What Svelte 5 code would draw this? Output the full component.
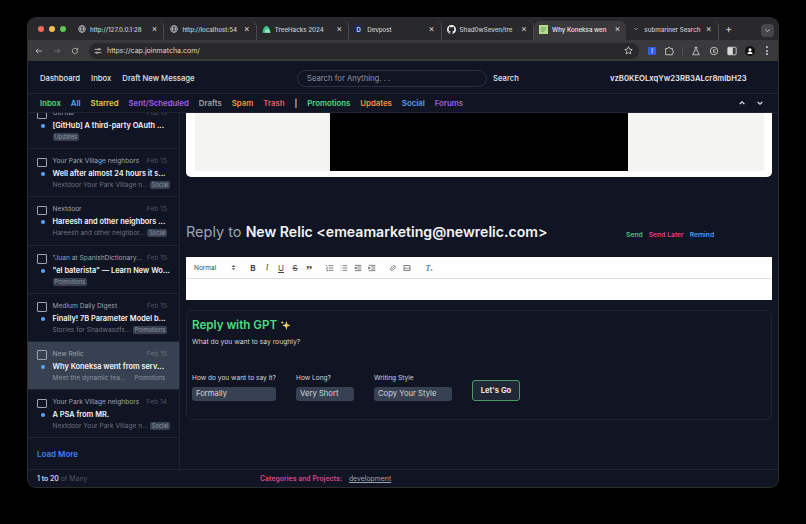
<script>
	const tabs = [
		{ title: 'http://127.0.0.1:28', icon: 'globe' },
		{ title: 'http://localhost:54', icon: 'globe' },
		{ title: 'TreeHacks 2024', icon: 'tree' },
		{ title: 'Devpost', icon: 'dev' },
		{ title: 'Shad0wSeven/tre', icon: 'gh' },
		{ title: 'Why Koneksa wen', icon: 'mail', active: true },
		{ title: 'submariner Search', icon: 'sub' }
	];

	const filters = [
		['Inbox', '#4ade80'], ['All', '#60a5fa'], ['Starred', '#eac54f'], ['Sent/Scheduled', '#a25fe0'],
		['Drafts', '#9ca3af'], ['Spam', '#fb923c'], ['Trash', '#e5606a']
	];
	const categories = [
		['Promotions', '#4ade80'], ['Updates', '#fb923c'], ['Social', '#5b9bea'], ['Forums', '#9b5fe0']
	];

	const mails = [
		{ from: 'GitHub', date: 'Feb 15', title: '[GitHub] A third-party OAuth ...', tag: 'Updates' },
		{ from: 'Your Park Village neighbors', date: 'Feb 15', title: 'Well after almost 24 hours it s...', preview: 'Nextdoor Your Park Village n...', tag: 'Social' },
		{ from: 'Nextdoor', date: 'Feb 15', title: 'Hareesh and other neighbors ...', preview: 'Hareesh and other neighbor...', tag: 'Social' },
		{ from: '"Juan at SpanishDictionary...', date: 'Feb 15', title: '"el baterista" — Learn New Wo...', tag: 'Promotions' },
		{ from: 'Medium Daily Digest', date: 'Feb 15', title: 'Finally! 7B Parameter Model b...', preview: 'Stories for Shadwasdfs...', tag: 'Promotions' },
		{ from: 'New Relic', date: 'Feb 15', title: 'Why Koneksa went from serv...', preview: 'Meet the dynamic tea...', tag: 'Promotions', selected: true },
		{ from: 'Your Park Village neighbors', date: 'Feb 14', title: 'A PSA from MR.', preview: 'Nextdoor Your Park Village n...', tag: 'Social' }
	];

	const selects = [
		{ label: 'How do you want to say it?', value: 'Formally', width: 84 },
		{ label: 'How Long?', value: 'Very Short', width: 58 },
		{ label: 'Writing Style', value: 'Copy Your Style', width: 78 }
	];
</script>

<div class="window">
	<div class="tabbar">
		<div class="lights"><i class="red"></i><i class="yellow"></i><i class="green"></i></div>
		{#each tabs as tab}
			<div class="tab" class:active={tab.active}>
				<span class="favicon">
					{#if tab.icon === 'globe'}
						<svg viewBox="0 0 10 10" width="8" height="8" fill="none" stroke="#c4c7cc" stroke-width="1"><circle cx="5" cy="5" r="4.2" /><ellipse cx="5" cy="5" rx="1.9" ry="4.2" /><path d="M1 5h8" /></svg>
					{:else if tab.icon === 'tree'}
						<svg viewBox="0 0 10 10" width="9" height="9"><path d="M0.5 8.5C1 4 3 1 5 1s4 3 4.5 7.5z" fill="#3fbf8f" /><path d="M3 8.5C3.5 6 4.5 4.5 6 4.5s2.5 2 3 4z" fill="#9be8c4" /></svg>
					{:else if tab.icon === 'dev'}
						<span class="dev">D</span>
					{:else if tab.icon === 'gh'}
						<svg viewBox="0 0 16 16" width="9" height="9" fill="#f1f1f1"><path d="M8 0C3.58 0 0 3.58 0 8c0 3.54 2.29 6.53 5.47 7.59.4.07.55-.17.55-.38v-1.34c-2.23.49-2.7-1.07-2.7-1.07-.36-.92-.89-1.17-.89-1.17-.73-.5.05-.49.05-.49.8.06 1.23.83 1.23.83.71 1.22 1.87.87 2.33.66.07-.52.28-.87.51-1.07-1.78-.2-3.64-.89-3.64-3.95 0-.87.31-1.59.82-2.15-.08-.2-.36-1.02.08-2.12 0 0 .67-.21 2.2.82A7.7 7.7 0 0 1 8 3.87c.68 0 1.36.09 2 .27 1.53-1.04 2.2-.82 2.2-.82.44 1.1.16 1.92.08 2.12.51.56.82 1.27.82 2.15 0 3.07-1.87 3.75-3.65 3.95.29.25.54.73.54 1.48v2.19c0 .21.15.46.55.38A8 8 0 0 0 16 8c0-4.42-3.58-8-8-8z" /></svg>
					{:else if tab.icon === 'mail'}
						<svg viewBox="0 0 10 10" width="9" height="9"><rect width="10" height="10" fill="#b7dc8e" /><path d="M2 3h6M2 5h6M2 7h4" stroke="#5f8f50" stroke-width="0.8" /></svg>
					{:else}
						<svg viewBox="0 0 10 10" width="6" height="6" fill="none" stroke="#c4c7cc" stroke-width="1"><path d="M2 3.5l3 3 3-3" /></svg>
					{/if}
				</span>
				<span class="tab-title">{tab.title}</span>
				<span class="tab-close">×</span>
			</div>
		{/each}
		<span class="plus">+</span>
		<span class="tab-menu">
			<svg viewBox="0 0 10 10" width="7" height="7" fill="none" stroke="#d5d5d5" stroke-width="1.3"><path d="M2 3.5l3 3 3-3" /></svg>
		</span>
	</div>

	<div class="toolbar">
		<svg class="nav-icon" viewBox="0 0 12 12" fill="none" stroke="#c8c8c8" stroke-width="1.2"><path d="M10.5 6h-9M5 2.5L1.5 6 5 9.5" /></svg>
		<svg class="nav-icon" viewBox="0 0 12 12" fill="none" stroke="#777" stroke-width="1.2"><path d="M1.5 6h9M7 2.5L10.5 6 7 9.5" /></svg>
		<svg class="nav-icon" viewBox="0 0 12 12" fill="none" stroke="#c8c8c8" stroke-width="1.2"><path d="M10 6a4 4 0 1 1-1.2-2.9L10 4.3V1.8" /><path d="M10 4.5H7.5" /></svg>
		<div class="omnibox">
			<span class="tune">
				<svg viewBox="0 0 12 12" width="8" height="8" fill="none" stroke="#d8d8d8" stroke-width="1.2"><path d="M1 3.5h5M9 3.5h2M1 8.5h2M6 8.5h5" /><circle cx="7.5" cy="3.5" r="1.3" /><circle cx="4.5" cy="8.5" r="1.3" /></svg>
			</span>
			<span class="url">https://cap.joinmatcha.com/</span>
			<svg class="star" viewBox="0 0 12 12" width="9" height="9" fill="none" stroke="#e2e2e2" stroke-width="1"><path d="M6 1l1.5 3.3 3.5.4-2.6 2.4.7 3.5L6 8.8l-3.1 1.8.7-3.5L1 4.7l3.5-.4z" /></svg>
		</div>
		<div class="ext">
			<span class="ext-blue">I</span>
			<svg viewBox="0 0 12 12" width="10" height="10" fill="none" stroke="#c8c8c8" stroke-width="1.1"><path d="M2 3h2.5a1.5 1.5 0 0 1 3 0H10v2.5a1.5 1.5 0 0 1 0 3v2H2z" /></svg>
			<i class="ext-sep"></i>
			<svg viewBox="0 0 12 12" width="10" height="10" fill="none" stroke="#c8c8c8" stroke-width="1.1"><path d="M4.5 1.5h3M5 1.5V5L2 10.5h8L7 5V1.500" /></svg>
			<svg viewBox="0 0 12 12" width="10" height="10" fill="none" stroke="#c8c8c8" stroke-width="1.1"><circle cx="6" cy="6" r="4.5" /><path d="M8 4.5H5.5v3H8" /></svg>
			<svg viewBox="0 0 12 12" width="10" height="10"><rect x="1" y="1.5" width="10" height="9" rx="1" fill="none" stroke="#d8d8d8" /><rect x="1" y="1.5" width="6" height="9" fill="#d8d8d8" /></svg>
			<svg viewBox="0 0 12 12" width="10" height="10"><circle cx="6" cy="6" r="6" fill="#111" /><circle cx="6" cy="4.5" r="1.8" fill="#fff" /><path d="M2.8 9.5c.5-2 1.7-2.7 3.2-2.7s2.700.7 3.200 2.700z" fill="#fff" /></svg>
			<span class="dots"><i></i><i></i><i></i></span>
		</div>
	</div>

	<nav class="topnav">
		<div class="links">
			<span>Dashboard</span>
			<span>Inbox</span>
			<span>Draft New Message</span>
		</div>
		<div class="searchbox">Search for Anything. . .</div>
		<span class="search-btn">Search</span>
		<span class="user-id">vzB0KEOLxqYw23RB3ALcr8mIbH23</span>
	</nav>

	<div class="filters">
		{#each filters as f}
			<span style="color: {f[1]}">{f[0]}</span>
		{/each}
		<span class="pipe">|</span>
		{#each categories as f}
			<span style="color: {f[1]}">{f[0]}</span>
		{/each}
		<div class="chevrons">
			<svg viewBox="0 0 10 10" width="8" height="8" fill="none" stroke="#e5e7eb" stroke-width="1.5"><path d="M2 6.5l3-3 3 3" /></svg>
			<svg viewBox="0 0 10 10" width="8" height="8" fill="none" stroke="#e5e7eb" stroke-width="1.5"><path d="M2 3.5l3 3 3-3" /></svg>
		</div>
	</div>

	<div class="body">
		<aside class="sidebar">
			<div class="mail-list">
				{#each mails as mail}
					<div class="mail" class:selected={mail.selected}>
						<span class="check"></span>
						<div class="mail-main">
							<div class="mail-head">
								<span class="from">{mail.from}</span>
								<span class="date">{mail.date}</span>
							</div>
							<div class="mail-title"><i class="dot"></i>{mail.title}</div>
							<div class="mail-foot">
								{#if mail.preview}<span class="preview">{mail.preview}</span>{/if}
								<span class="tag">{mail.tag}</span>
							</div>
						</div>
					</div>
				{/each}
			</div>
			<div class="load-more">Load More</div>
		</aside>

		<main class="content">
			<div class="message">
				<div class="message-inner">
					<div class="black"></div>
				</div>
			</div>

			<div class="reply-head">
				<h2><span>Reply to</span> <strong>New Relic &lt;emeamarketing@newrelic.com&gt;</strong></h2>
				<div class="reply-actions">
					<span class="send">Send</span>
					<span class="later">Send Later</span>
					<span class="remind">Remind</span>
				</div>
			</div>

			<div class="editor">
				<div class="ql-bar">
					<span class="ql-size">Normal
						<svg viewBox="0 0 8 10" width="5" height="7" fill="#555"><path d="M1 4l3-3 3 3zM1 6l3 3 3-3z" /></svg>
					</span>
					<div class="ql-group">
						<b>B</b><em>I</em><u>U</u><s>S</s><span class="ql-quote">”</span>
					</div>
					<div class="ql-group">
						<span><svg viewBox="0 0 12 12"><path d="M4 2.5h7M4 6h7M4 9.5h7M1 1.5v2M1 5h1L1 7h1M1 8.5h1v2H1" /></svg></span>
						<span><svg viewBox="0 0 12 12"><path d="M4 2.5h7M4 6h7M4 9.5h7M1 2.5h1M1 6h1M1 9.5h1" /></svg></span>
						<span><svg viewBox="0 0 12 12"><path d="M5 4.5h6M5 7.5h6M1 2h10M1 10h10M3.5 4.5L1 6l2.5 1.5z" /></svg></span>
						<span><svg viewBox="0 0 12 12"><path d="M5 4.5h6M5 7.5h6M1 2h10M1 10h10M1 4.5L3.5 6 1 7.5z" /></svg></span>
					</div>
					<div class="ql-group">
						<span><svg viewBox="0 0 12 12"><path d="M5 7l2-2M4.5 4.5L3 6a2 2 0 0 0 3 3l1-1M7.5 7.500L9 6a2 2 0 0 0-3-3L5 4" /></svg></span>
						<span><svg viewBox="0 0 12 12"><rect x="1.5" y="2.5" width="9" height="7" /><path d="M1.5 8l3-2.5 2 1.5 1.5-1 2.500 2" /></svg></span>
					</div>
					<span class="ql-clean"><em>T</em><small>x</small></span>
				</div>
				<div class="ql-editor"></div>
			</div>

			<section class="gpt">
				<h3>Reply with GPT
					<svg viewBox="0 0 12 12" width="11" height="11" fill="#f5d76e"><path d="M7 1l1 3.5L11.5 6 8 7.2 7 11 5.8 7.2 2.5 6l3.300-1.500z" /><path d="M2.5 1l.5 1.300 1.200.5-1.200.5-.5 1.200-.5-1.200L.8 2.800 2 2.300z" /></svg>
				</h3>
				<p>What do you want to say roughly?</p>
				<div class="gpt-row">
					{#each selects as s}
						<div class="field">
							<label>{s.label}</label>
							<div class="select" style="width: {s.width}px">{s.value}</div>
						</div>
					{/each}
					<button>Let's Go</button>
				</div>
			</section>
		</main>
	</div>

	<footer>
		<div class="count"><b>1 to 20</b> of Many</div>
		<div class="cats"><b>Categories and Projects:</b><u>development</u></div>
	</footer>
</div>

<style>
	:global(body) {
		background: #000;
		margin: 0;
	}

	.window {
		width: 750px;
		height: 469px;
		margin: 18px 0 37px 28px;
		border-radius: 8px;
		overflow: hidden;
		background: #111422;
		box-shadow: 0 0 0 1px #2c2c2e;
		display: flex;
		flex-direction: column;
		font-family: Inter, "Liberation Sans", sans-serif;
		color: #e5e7eb;
	}

	/* chrome */
	.tabbar {
		height: 22px;
		background: #29292b;
		display: flex;
		align-items: flex-end;
		flex-shrink: 0;
	}

	.lights {
		width: 44px;
		height: 22px;
		display: flex;
		align-items: center;
		gap: 5px;
		padding-left: 10px;
		box-sizing: border-box;
	}

	.lights i {
		width: 6px;
		height: 6px;
		border-radius: 50%;
	}

	.red { background: #ec6a5e; }
	.yellow { background: #f4bf4f; }
	.green { background: #61c554; }

	.tab {
		width: 92.4px;
		height: 19px;
		box-sizing: border-box;
		padding: 0 6px 3px 5px;
		display: flex;
		align-items: center;
		gap: 4px;
		font-size: 6.2px;
		color: #c8cacd;
		border-right: 1px solid #4a4a4d;
		border-radius: 6px 6px 0 0;
	}

	.tab.active {
		background: #3a3a3c;
		color: #e8e8e8;
		border-right: none;
	}

	.favicon {
		width: 9px;
		display: flex;
		align-items: center;
		justify-content: center;
		flex-shrink: 0;
	}

	.dev {
		width: 9px;
		height: 9px;
		border-radius: 2px;
		background: #1e2c48;
		color: #b9d3f5;
		font-size: 6px;
		font-weight: 700;
		text-align: center;
		line-height: 9px;
	}

	.tab-title {
		flex: 1;
		white-space: nowrap;
		font-weight: 500;
	}

	.tab-close {
		font-size: 9px;
		line-height: 8px;
		color: #d0d0d0;
	}

	.plus {
		width: 20px;
		text-align: center;
		font-size: 11px;
		color: #d0d0d0;
		padding-bottom: 4px;
		line-height: 14px;
	}

	.tab-menu {
		width: 13px;
		height: 13px;
		margin: 0 4px 3px auto;
		border-radius: 4px;
		background: #47474a;
		display: flex;
		align-items: center;
		justify-content: center;
	}

	.toolbar {
		height: 21px;
		background: #3a3a3c;
		display: flex;
		align-items: center;
		padding-left: 7px;
		flex-shrink: 0;
	}

	.nav-icon {
		width: 8px;
		height: 8px;
		margin-right: 10px;
		flex-shrink: 0;
	}

	.omnibox {
		width: 550px;
		height: 16px;
		border-radius: 8px;
		background: #29292b;
		display: flex;
		align-items: center;
		font-size: 7px;
		color: #d8d8d8;
	}

	.tune {
		margin: 0 5px;
		display: flex;
	}

	.url { flex: 1; }

	.star { margin-right: 6px; }

	.ext {
		flex: 1;
		display: flex;
		align-items: center;
		gap: 8px;
		padding-left: 9px;
	}

	.ext-blue {
		width: 8px;
		height: 8px;
		background: #2563eb;
		color: #fff;
		font-size: 6px;
		line-height: 8px;
		text-align: center;
		border-radius: 1px;
	}

	.ext-sep {
		width: 1px;
		height: 8px;
		background: #55555a;
	}

	.dots {
		display: flex;
		flex-direction: column;
		gap: 1.5px;
		margin-left: 3px;
	}

	.dots i {
		width: 2px;
		height: 2px;
		border-radius: 50%;
		background: #d0d0d0;
	}

	/* app nav */
	.topnav {
		height: 33px;
		display: flex;
		align-items: center;
		padding: 2px 0 0 12px;
		border-bottom: 1px solid #1e2433;
		box-sizing: border-box;
		flex-shrink: 0;
		font-size: 7.7px;
		font-weight: 500;
	}

	.links {
		width: 257px;
		display: flex;
		gap: 11px;
		color: #e5e7eb;
	}

	.searchbox {
		width: 190px;
		height: 17px;
		box-sizing: border-box;
		border: 1px solid #2b3140;
		border-radius: 9px;
		padding-left: 9px;
		line-height: 15px;
		color: #8f96a3;
		font-weight: 400;
	}

	.search-btn {
		margin-left: 6px;
		width: 117px;
	}

	.user-id {
		font-weight: 600;
		white-space: nowrap;
	}

	.filters {
		height: 19px;
		display: flex;
		align-items: center;
		gap: 10px;
		padding: 0 14px 0 12px;
		font-size: 7.8px;
		font-weight: 600;
		border-bottom: 1px solid #1e2433;
		box-sizing: border-box;
		flex-shrink: 0;
	}

	.pipe { color: #d1d5db; }

	.chevrons {
		margin-left: auto;
		display: flex;
		gap: 10px;
	}

	/* layout */
	.body {
		flex: 1;
		display: flex;
		min-height: 0;
	}

	.sidebar {
		width: 152px;
		flex-shrink: 0;
		border-right: 1px solid #1e2433;
		box-sizing: border-box;
		overflow: hidden;
	}

	.mail-list {
		margin-top: -12px;
	}

	.mail {
		height: 48.2px;
		box-sizing: border-box;
		border-bottom: 1px solid #1e2433;
		display: flex;
		padding: 7px 12px 0 9px;
		gap: 6px;
	}

	.mail.selected {
		background: #374151;
	}

	.check {
		width: 9.5px;
		height: 9.5px;
		box-sizing: border-box;
		margin-top: 1.5px;
		border: 1px solid #9ca3af;
		border-radius: 1px;
		flex-shrink: 0;
	}

	.mail-main {
		flex: 1;
		min-width: 0;
	}

	.mail-head {
		display: flex;
		justify-content: space-between;
		font-size: 6.65px;
		line-height: 10px;
		color: #9ca3af;
		white-space: nowrap;
	}

	.date { color: #4b5563; }
	.selected .date { color: #6b7280; }

	.mail-title {
		position: relative;
		margin-top: 1px;
		font-size: 7.4px;
		font-weight: 600;
		line-height: 13px;
		color: #f3f4f6;
		white-space: nowrap;
	}

	.dot {
		position: absolute;
		left: -12px;
		top: 5px;
		width: 4px;
		height: 4px;
		border-radius: 50%;
		background: #60a5fa;
	}

	.mail-foot {
		display: flex;
		align-items: center;
		gap: 2px;
		height: 10px;
		white-space: nowrap;
	}

	.preview {
		font-size: 6.6px;
		color: #6b7280;
	}

	.tag {
		font-size: 5.7px;
		line-height: 8px;
		padding: 0 2px;
		border-radius: 2px;
		background: #374151;
		color: #8f96a3;
	}

	.preview + .tag {
		margin-left: auto;
	}

	.selected .tag { background: none; }
	.selected .preview { color: #8b93a0; }

	.load-more {
		padding: 11px 0 0 9px;
		font-size: 8px;
		font-weight: 600;
		color: #3b82f6;
	}

	.content {
		flex: 1;
		min-width: 0;
		padding: 0 6px;
	}

	.message {
		height: 64px;
		background: #fff;
		border-radius: 0 0 5px 5px;
		padding: 0 8px 6px 9px;
		box-sizing: border-box;
	}

	.message-inner {
		height: 100%;
		background: #f4f4f2;
		display: flex;
		justify-content: center;
		padding-right: 1px;
	}

	.black {
		width: 298px;
		background: #000;
		margin-right: 1px;
	}

	.reply-head {
		height: 80px;
		display: flex;
		align-items: center;
		padding-top: 30px;
		box-sizing: border-box;
	}

	h2 {
		margin: 0;
		width: 440px;
		font-size: 14.5px;
		line-height: 20px;
		font-weight: 400;
		color: #9ca3af;
		white-space: nowrap;
	}

	h2 strong {
		font-size: 14.1px;
		font-weight: 600;
		color: #f3f4f6;
	}

	.reply-actions {
		display: flex;
		gap: 6px;
		font-size: 6.8px;
		font-weight: 500;
		padding-top: 4px;
	}

	.send { color: #4ade80; }
	.later { color: #ec4899; }
	.remind { color: #60a5fa; }

	.editor {
		height: 43px;
		background: #fff;
		display: flex;
		flex-direction: column;
	}

	.ql-bar {
		height: 22px;
		border-bottom: 1px solid #ddd;
		display: flex;
		align-items: center;
		padding-left: 8px;
		color: #444;
		box-sizing: border-box;
		flex-shrink: 0;
	}

	.ql-size {
		width: 52px;
		display: flex;
		justify-content: space-between;
		align-items: center;
		font-size: 6.5px;
		padding-right: 10px;
		box-sizing: border-box;
		flex-shrink: 0;
	}

	.ql-group {
		display: flex;
		align-items: center;
		font-size: 8px;
		margin-right: 7px;
	}

	.ql-group > * {
		width: 14px;
		display: flex;
		justify-content: center;
		align-items: center;
	}

	.ql-group em {
		font-family: "Liberation Serif", serif;
	}

	.ql-quote {
		font-size: 13px;
		font-weight: 700;
		line-height: 8px;
		padding-top: 4px;
		font-family: "Liberation Serif", serif;
	}

	.ql-group svg {
		width: 8px;
		height: 8px;
		fill: none;
		stroke: #444;
		stroke-width: 1;
	}

	.ql-clean {
		width: 14px;
		margin-left: 1px;
		text-align: center;
		font-family: "Liberation Serif", serif;
		font-size: 8.5px;
		color: #444;
	}

	.ql-clean small { font-size: 5px; }

	.ql-editor { flex: 1; }

	.gpt {
		margin-top: 10px;
		height: 110px;
		box-sizing: border-box;
		border: 1px solid #1e2433;
		border-radius: 6px;
		padding: 6px 5px 0;
	}

	h3 {
		margin: 0;
		font-size: 11.6px;
		line-height: 16px;
		font-weight: 600;
		color: #4ade80;
		display: flex;
		align-items: center;
		gap: 3px;
	}

	.gpt p {
		margin: 4px 0 0;
		font-size: 6.75px;
		line-height: 10px;
		color: #d1d5db;
	}

	.gpt-row {
		display: flex;
		align-items: flex-start;
		gap: 20px;
		margin-top: 26px;
	}

	.field label {
		display: block;
		font-size: 6.6px;
		line-height: 10px;
		color: #d1d5db;
		margin-bottom: 4px;
	}

	.select {
		height: 14px;
		border-radius: 3px;
		background: #374151;
		color: #d1d5db;
		font-size: 7.7px;
		line-height: 14px;
		padding-left: 4px;
		box-sizing: border-box;
	}

	button {
		margin-top: 7px;
		width: 48px;
		height: 21px;
		border: 1.5px solid #4a9a68;
		border-radius: 3px;
		background: #202736;
		color: #e5e7eb;
		font: 700 7.6px Inter, sans-serif;
		padding: 0;
	}

	footer {
		height: 18px;
		border-top: 1px solid #1e2433;
		box-sizing: border-box;
		display: flex;
		align-items: center;
		padding-left: 9px;
		font-size: 6.9px;
		flex-shrink: 0;
	}

	.count {
		width: 223px;
		color: #4b5563;
	}

	.count b {
		font-weight: 600;
		color: #d1d5db;
	}

	.cats {
		display: flex;
		gap: 7px;
	}

	.cats b {
		font-weight: 600;
		color: #d6458f;
	}

	.cats u { color: #9ca3af; }
</style>
